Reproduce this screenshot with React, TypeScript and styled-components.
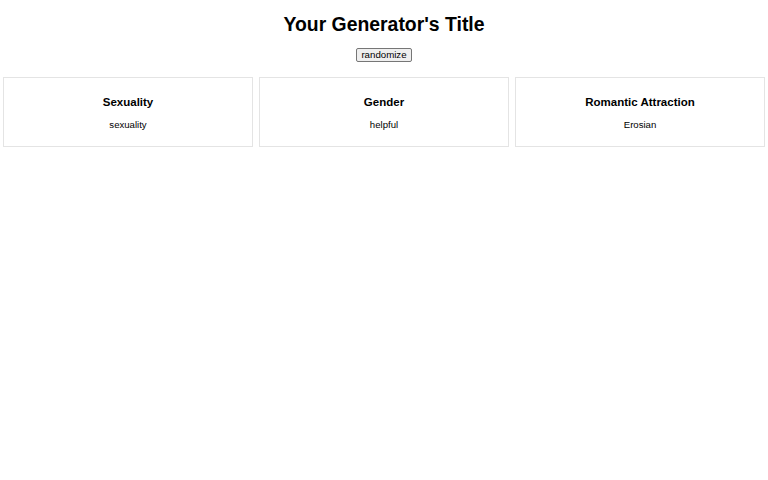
import * as React from "react"
import styled, { createGlobalStyle } from "styled-components"

const GlobalStyle = createGlobalStyle`
  body {
    margin: 0;
    background: #fff;
    font-family: "Liberation Sans", Arial, sans-serif;
    color: #000;
  }
`

const Page = styled.div`
  display: flex;
  flex-direction: column;
  align-items: center;
  padding-top: 13px;
`
const Title = styled.h1`
  font-size: 19.4px;
  font-weight: bold;
  margin: 0;
  line-height: 22px;
`
const Button = styled.button`
  margin-top: 13px;
  height: 14px;
  box-sizing: border-box;
  font-family: "Liberation Sans", Arial, sans-serif;
  font-size: 9.7px;
  line-height: 10px;
  padding: 0 4px;
  border: 1px solid #767676;
  border-radius: 2px;
  background: #efefef;
  color: #000;
`
const Cards = styled.div`
  align-self: stretch;
  display: flex;
  gap: 6px;
  padding: 0 3px;
  margin-top: 15px;
`
const Card = styled.div`
  flex: 1;
  border: 1px solid #e4e4e4;
  display: flex;
  flex-direction: column;
  align-items: center;
  padding-top: 17px;
  box-sizing: border-box;
  height: 70px;
`
const CardTitle = styled.div`
  font-size: 11.5px;
  font-weight: bold;
  line-height: 14px;
`
const CardValue = styled.div`
  font-size: 9.6px;
  line-height: 12px;
  margin-top: 10px;
`

const cards = [
  { title: "Sexuality", value: "sexuality" },
  { title: "Gender", value: "helpful" },
  { title: "Romantic Attraction", value: "Erosian" },
]

export default function App() {
  return (
    <Page>
      <GlobalStyle />
      <Title>Your Generator's Title</Title>
      <Button>randomize</Button>
      <Cards>
        {cards.map((c) => (
          <Card key={c.title}>
            <CardTitle>{c.title}</CardTitle>
            <CardValue>{c.value}</CardValue>
          </Card>
        ))}
      </Cards>
    </Page>
  )
}
